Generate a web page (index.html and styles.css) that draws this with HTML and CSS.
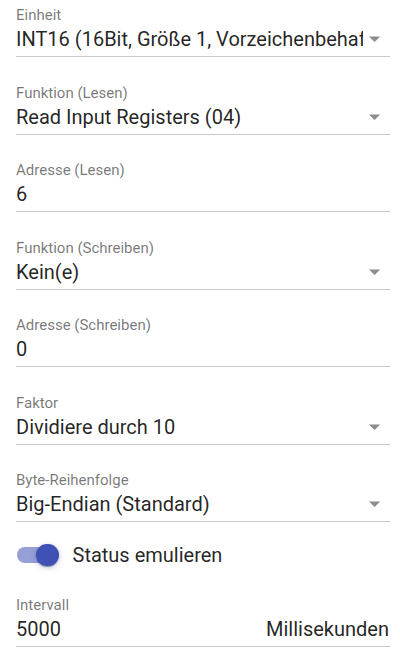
FILE: index.html
```html
<!DOCTYPE html>
<html lang="de">
<head>
<meta charset="utf-8">
<title>Modbus</title>
<link rel="stylesheet" href="styles.css">
</head>
<body>
<div class="form">
  <div class="field">
    <label class="label">Einheit</label>
    <div class="control">
      <span class="value">INT16 (16Bit, Größe 1, Vorzeichenbehaftet)</span>
      <svg class="arrow" viewBox="0 0 27 23" width="27" height="23"><polygon points="6,8.5 17.2,8.5 11.6,14.1"/></svg>
    </div>
  </div>
  <div class="field">
    <label class="label">Funktion (Lesen)</label>
    <div class="control">
      <span class="value">Read Input Registers (04)</span>
      <svg class="arrow" viewBox="0 0 27 23" width="27" height="23"><polygon points="6,8.5 17.2,8.5 11.6,14.1"/></svg>
    </div>
  </div>
  <div class="field">
    <label class="label">Adresse (Lesen)</label>
    <div class="control">
      <span class="value">6</span>
    </div>
  </div>
  <div class="field">
    <label class="label">Funktion (Schreiben)</label>
    <div class="control">
      <span class="value">Kein(e)</span>
      <svg class="arrow" viewBox="0 0 27 23" width="27" height="23"><polygon points="6,8.5 17.2,8.5 11.6,14.1"/></svg>
    </div>
  </div>
  <div class="field">
    <label class="label">Adresse (Schreiben)</label>
    <div class="control">
      <span class="value">0</span>
    </div>
  </div>
  <div class="field">
    <label class="label">Faktor</label>
    <div class="control">
      <span class="value">Dividiere durch 10</span>
      <svg class="arrow" viewBox="0 0 27 23" width="27" height="23"><polygon points="6,8.5 17.2,8.5 11.6,14.1"/></svg>
    </div>
  </div>
  <div class="field field-last">
    <label class="label">Byte-Reihenfolge</label>
    <div class="control">
      <span class="value">Big-Endian (Standard)</span>
      <svg class="arrow" viewBox="0 0 27 23" width="27" height="23"><polygon points="6,8.5 17.2,8.5 11.6,14.1"/></svg>
    </div>
  </div>
  <div class="switch-row">
    <span class="switch">
      <span class="track"></span>
      <span class="thumb"></span>
    </span>
    <span class="switch-label">Status emulieren</span>
  </div>
  <div class="field">
    <label class="label">Intervall</label>
    <div class="control control-split">
      <span class="value">5000</span>
      <span class="adornment">Millisekunden</span>
    </div>
  </div>
</div>
</body>
</html>
```

FILE: styles.css
```css
html, body {
  margin: 0;
  padding: 0;
  background: #ffffff;
}

body {
  font-family: Roboto, "Liberation Sans", Arial, sans-serif;
  color: rgba(0, 0, 0, 0.87);
}

.form {
  padding: 7px 10px 0 16px;
  display: flex;
  flex-direction: column;
}

.field {
  display: flex;
  flex-direction: column;
  margin-bottom: 27.5px;
}

.field-last {
  margin-bottom: 11.5px;
}

.label {
  display: block;
  font-size: 15px;
  line-height: 16px;
  color: rgba(0, 0, 0, 0.54);
}

.control {
  margin-top: 5px;
  display: flex;
  align-items: flex-start;
  padding-bottom: 5px;
  border-bottom: 1px solid #c9c9c9;
}

.value {
  flex: 1;
  min-width: 0;
  font-size: 20px;
  line-height: 23px;
  height: 23px;
  white-space: nowrap;
  overflow: hidden;
  color: rgba(0, 0, 0, 0.87);
}

.arrow {
  flex: none;
  display: block;
  fill: #8d8d8d;
}

.control-split {
  justify-content: space-between;
}

.control-split .value {
  flex: none;
}

.adornment {
  font-size: 20px;
  line-height: 23px;
  color: rgba(0, 0, 0, 0.87);
  margin-right: 1px;
}

.switch-row {
  display: flex;
  align-items: center;
  height: 43px;
  margin-bottom: 20.5px;
}

.switch {
  position: relative;
  flex: none;
  width: 65px;
  height: 43px;
  margin-left: -12.5px;
  display: flex;
  align-items: center;
  padding-left: 13.5px;
  box-sizing: border-box;
}

.track {
  display: block;
  width: 38px;
  height: 16px;
  border-radius: 8px;
  background: #3f51b5;
  opacity: 0.55;
}

.thumb {
  position: absolute;
  left: 32.5px;
  top: 10.25px;
  width: 22.5px;
  height: 22.5px;
  border-radius: 50%;
  background: #3f51b5;
  box-shadow: 0 2px 1px -1px rgba(0, 0, 0, 0.2), 0 1px 1px 0 rgba(0, 0, 0, 0.14), 0 1px 3px 0 rgba(0, 0, 0, 0.12), 0 2px 6px 0 rgba(63, 81, 181, 0.25);
}

.switch-label {
  font-size: 20px;
  line-height: 27px;
  margin-left: 4px;
  color: rgba(0, 0, 0, 0.87);
}
```
